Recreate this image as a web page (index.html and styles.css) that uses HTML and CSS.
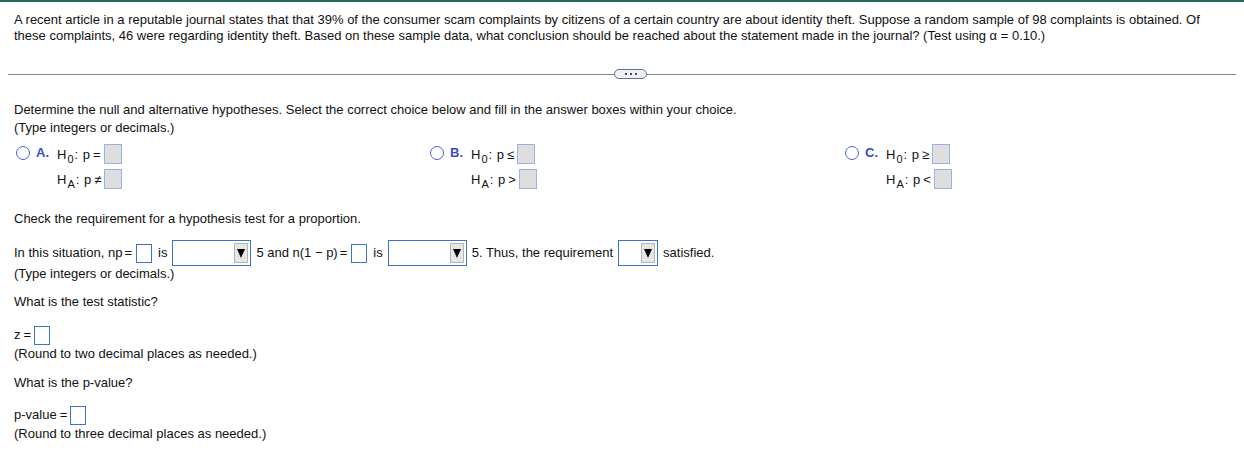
FILE: index.html
```html
<!DOCTYPE html>
<html>
<head>
<meta charset="utf-8">
<link rel="stylesheet" href="styles.css">
</head>
<body>
<div class="page">
  <div class="question">
    A recent article in a reputable journal states that that 39% of the consumer scam complaints by citizens of a certain country are about identity theft. Suppose a random sample of 98 complaints is obtained. Of these complaints, 46 were regarding identity theft. Based on these sample data, what conclusion should be reached about the statement made in the journal? (Test using α = 0.10.)
  </div>
  <div class="divider"><span class="pill"><span class="dot"></span><span class="dot"></span><span class="dot"></span></span></div>

  <div class="content">
    <p class="p-det">Determine the null and alternative hypotheses. Select the correct choice below and fill in the answer boxes within your choice.</p>
    <p class="p-type">(Type integers or decimals.)</p>

    <div class="choices">
      <div class="choice">
        <span class="radio"></span><span class="letter">A.</span>
        <div class="hyps">
          <div class="hyp">H<sub>0</sub><span class="colon">:</span> p<span class="op">=</span><span class="hbox"></span></div>
          <div class="hyp">H<sub>A</sub><span class="colon">:</span> p<span class="op">≠</span><span class="hbox"></span></div>
        </div>
      </div>
      <div class="choice">
        <span class="radio"></span><span class="letter">B.</span>
        <div class="hyps">
          <div class="hyp">H<sub>0</sub><span class="colon">:</span> p<span class="op">≤</span><span class="hbox"></span></div>
          <div class="hyp">H<sub>A</sub><span class="colon">:</span> p<span class="op">&gt;</span><span class="hbox"></span></div>
        </div>
      </div>
      <div class="choice">
        <span class="radio"></span><span class="letter">C.</span>
        <div class="hyps">
          <div class="hyp">H<sub>0</sub><span class="colon">:</span> p<span class="op">≥</span><span class="hbox"></span></div>
          <div class="hyp">H<sub>A</sub><span class="colon">:</span> p<span class="op">&lt;</span><span class="hbox"></span></div>
        </div>
      </div>
    </div>

    <p class="p-check">Check the requirement for a hypothesis test for a proportion.</p>

    <div class="req">
      <span>In this situation, np<span class="op">=</span></span><span class="ibox"></span>
      <span>is</span>
      <span class="select wide"><span class="arrow"></span></span>
      <span>5 and n(1 − p)<span class="op">=</span></span><span class="ibox"></span>
      <span>is</span>
      <span class="select wide"><span class="arrow"></span></span>
      <span>5. Thus, the requirement</span>
      <span class="select narrow"><span class="arrow"></span></span>
      <span>satisfied.</span>
    </div>
    <p class="p-type2">(Type integers or decimals.)</p>

    <p class="p-test">What is the test statistic?</p>

    <div class="ans z"><span>z<span class="op">=</span></span><span class="ibox"></span></div>
    <p class="p-round">(Round to two decimal places as needed.)</p>

    <p class="p-pq">What is the p-value?</p>

    <div class="ans pv"><span>p-value<span class="op">=</span></span><span class="ibox"></span></div>
    <p class="p-round">(Round to three decimal places as needed.)</p>
  </div>
</div>
</body>
</html>
```

FILE: styles.css
```css
* { box-sizing: border-box; }
html, body { margin: 0; padding: 0; background: #fff; }
body {
  font-family: "Liberation Sans", Arial, sans-serif;
  font-size: 13px;
  color: #111;
  line-height: 16px;
}
.page {
  border-top: 2px solid #1b6b5f;
  width: 1244px;
  height: 464px;
}
.question {
  padding: 10px 14px 0 14px;
  line-height: 16px;
}
.op { margin-left: 3px; }
.divider {
  position: relative;
  height: 1px;
  background: #7c8794;
  margin: 30px 8px 0 8px;
}
.pill {
  position: absolute;
  left: 606px;
  top: -5px;
  width: 33px;
  height: 10px;
  border: 1px solid #62748b;
  border-radius: 6px;
  background: #eef1f5;
  display: flex;
  align-items: center;
  justify-content: center;
  gap: 3px;
}
.dot { width: 2px; height: 2px; background: #3d4b5c; display: block; }
.content { padding: 0 14px; }
p { margin: 0; }
.p-det { margin-top: 27px; }
.p-type { margin-top: 2px; }
.choices {
  display: grid;
  grid-template-columns: 414px 415px 400px;
  margin-top: 9px;
}
.choice { display: flex; align-items: flex-start; }
.radio {
  width: 14px; height: 14px;
  border: 1.5px solid #4a64d8;
  border-radius: 50%;
  margin: 0 6px 0 2px;
  margin-top: 1px;
  flex: none;
}
.letter { color: #3550c8; font-weight: bold; font-size: 13px; width: 22px; line-height: 15px; }
.hyps { display: flex; flex-direction: column; gap: 4px; margin-left: -1px; }
.hyp { display: block; height: 21px; font-size: 13px; line-height: 20px; white-space: nowrap; }
.hyp sub { font-size: 11px; line-height: 10px; vertical-align: -4px; margin-left: 1px; }
.colon { margin-left: 1px; margin-right: 1px; }
.hbox {
  display: inline-block;
  vertical-align: middle;
  width: 18px; height: 20px;
  background: #dedede;
  border: 1px solid #97b4e6;
  margin-left: 3px;
  margin-top: -3px;
}
.p-check { margin-top: 20px; }
.req {
  display: flex;
  align-items: center;
  margin-top: 13px;
  height: 26px;
}
.req > span { margin-right: 5px; }
.req .op { margin-left: 2px; }
.ibox {
  display: inline-block;
  width: 16px; height: 19px;
  border: 1px solid #3c73d0;
  background: #fff;
}
.req .ibox { margin-right: 6px; margin-left: -1px; }
.select {
  display: inline-flex;
  justify-content: flex-end;
  align-items: center;
  height: 26px;
  border: 1px solid #3c73d0;
  background: #fff;
  padding-right: 2px;
}
.select.wide { width: 79px; }
.select.narrow { width: 40px; }
.arrow {
  width: 14px; height: 20px;
  background: #e6e6e6;
  border: 1px solid #b7b7b7;
  position: relative;
}
.arrow::after {
  content: "";
  position: absolute;
  left: 2px; top: 5px;
  border-left: 4.5px solid transparent;
  border-right: 4.5px solid transparent;
  border-top: 9px solid #000;
}
.p-type2 { margin-top: 0px; }
.p-test { margin-top: 12px; }
.ans { display: flex; align-items: center; height: 20px; }
.ans .ibox { margin-left: 3px; }
.ans.z { margin-top: 15px; }
.p-round { margin-top: 1px; }
.p-pq { margin-top: 13px; }
.ans.pv { margin-top: 14px; }
```
